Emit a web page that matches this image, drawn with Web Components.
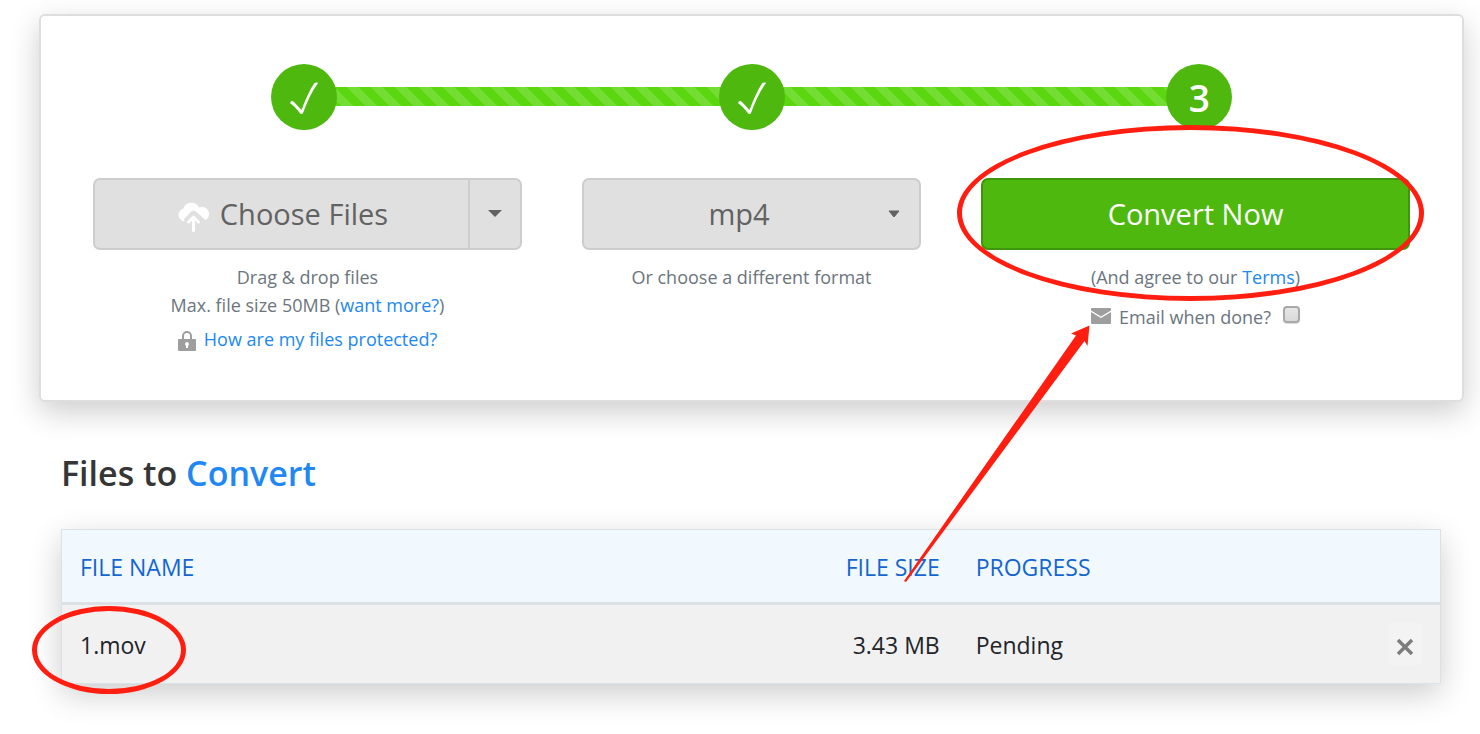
<!DOCTYPE html>
<html lang="en">
<head>
<meta charset="utf-8">
<title>Files to Convert</title>
<style>
  html { background: #fff; }
  body { margin: 0; font-family: "Open Sans", "Noto Sans", sans-serif; color: #212529; }
</style>
</head>
<body>
<converter-page></converter-page>
<script>
const define = (name, html) => {
  const tpl = document.createElement('template');
  tpl.innerHTML = html;
  customElements.define(name, class extends HTMLElement {
    constructor() {
      super();
      this.attachShadow({ mode: 'open' }).append(tpl.content.cloneNode(true));
    }
  });
};

define('step-badge', `
  <style>
    :host { position: relative; display: grid; place-items: center; width: 66px; height: 66px; border-radius: 50%;
      background: #4eb80e; color: #fff; font-size: 37px; font-weight: 600; line-height: 1; }
    ::slotted(svg) { display: block; }
  </style>
  <slot></slot>`);

define('progress-steps', `
  <style>
    :host { position: relative; display: flex; justify-content: space-between; width: 73%; margin: 0 auto; }
    .bar { position: absolute; inset: 23px 33px auto; height: 19px; background: #5bd70f
      linear-gradient(45deg, rgba(255,255,255,.15) 25%, transparent 25%, transparent 50%,
        rgba(255,255,255,.15) 50%, rgba(255,255,255,.15) 75%, transparent 75%) 19px 0 / 24px 24px; }
  </style>
  <div class="bar"></div>
  <slot></slot>`);

define('hint-text', `
  <style>
    :host { display: block; font-size: 18px; line-height: 28px; text-align: center; color: #6c757d; }
    ::slotted(a) { color: #2188f3; text-decoration: none; }
  </style>
  <slot></slot>`);

define('icon-line', `
  <style>
    :host { display: flex; justify-content: center; align-items: center; gap: 8px; margin-top: 6px;
      font-size: 18px; line-height: 28px; color: #6c757d; }
    ::slotted(a) { color: #2188f3; text-decoration: none; }
    ::slotted(svg) { margin-top: 4px; }
  </style>
  <slot></slot>`);

define('file-picker', `
  <style>
    :host { display: flex; height: 72px; box-sizing: border-box; border: 2px solid #cdcdcd; border-radius: 7px;
      background: #e0e0e0; overflow: hidden; }
    button { display: flex; align-items: center; justify-content: center; border: 0; margin: 0; padding: 0;
      background: none; color: #626262; font: 29px/40px "Open Sans", "Noto Sans", sans-serif; }
    .main { flex: 1; gap: 10px; padding-left: 3px; }
    .main svg { margin-top: 6px; }
    .more { width: 52px; border-left: 2px solid #cdcdcd; }
  </style>
  <button class="main" type="button">
    <svg width="32" height="32" viewBox="0 0 32 32" aria-hidden="true">
      <path fill="#fff" d="M3.500 19.500A6.500 6.500 0 0 1 5.200 7.800 8.500 8.500 0 0 1 21 6.600a7 7 0 0 1 10 6.600 6.800 6.800 0 0 1-3.500 5.800L19 11.500a5 5 0 0 0-7 0L6 20.500z"/>
      <path fill="none" stroke="#e0e0e0" stroke-width="3" stroke-linejoin="round" stroke-linecap="round" d="M7.500 18.500l8-7.500 8 7.500"/>
      <path fill="none" stroke="#fff" stroke-width="3" stroke-linecap="round" stroke-linejoin="round" d="M15.500 29.500V16.500M10.500 21l5-5 5 5"/>
    </svg>
    <span>Choose Files</span>
  </button>
  <button class="more" type="button" aria-label="More sources">
    <svg width="14" height="8" viewBox="0 0 14 8" aria-hidden="true"><path fill="#626262" d="M0 0h14L7 7z"/></svg>
  </button>`);

define('format-select', `
  <style>
    :host { display: grid; }
    select, svg { grid-area: 1 / 1; }
    select { appearance: none; height: 72px; width: 100%; box-sizing: border-box; margin: 0; padding: 0 25px 0 0;
      border: 2px solid #cdcdcd; border-radius: 7px; background: #e0e0e0; color: #626262;
      font: 29px/40px "Open Sans", "Noto Sans", sans-serif; text-align: center; text-align-last: center; }
    svg { place-self: center end; margin-right: 21px; pointer-events: none; }
  </style>
  <select aria-label="Output format"><option>mp4</option></select>
  <svg width="12" height="8" viewBox="0 0 12 8" aria-hidden="true"><path fill="#626262" stroke="#626262" stroke-linejoin="round" d="M1 1h10L6 7z"/></svg>`);

define('convert-button', `
  <style>
    :host { display: block; }
    button { display: block; width: 100%; height: 72px; box-sizing: border-box; border: 2px solid #3f950b;
      border-radius: 7px; background: #4eb80e; color: #fff; font: 29px/40px "Open Sans", "Noto Sans", sans-serif; }
  </style>
  <button type="button"><slot></slot></button>`);

define('ring-mark', `
  <style>
    :host { position: absolute; box-sizing: border-box; border: 5px solid #ff1e10; border-radius: 50%;
      pointer-events: none; z-index: 2; }
  </style>`);

define('arrow-mark', `
  <style>
    :host { position: absolute; pointer-events: none; z-index: 2; }
    svg { display: block; }
  </style>
  <svg width="186" height="257" viewBox="0 0 186 257" aria-hidden="true">
    <path fill="#ff1e10" d="M185.500 0.500L167 8.500l5 2L0 256l2 1L180.500 16l3 5z"/>
  </svg>`);

define('email-option', `
  <style>
    :host { display: flex; justify-content: center; align-items: center; gap: 8px; margin-top: 12px;
      font-size: 18px; line-height: 28px; color: #6c757d; }
    svg { margin-bottom: 2px; }
    input { appearance: none; width: 17px; height: 17px; margin: 0 0 6px 4px; border: 2px solid #a9a9a9; border-radius: 4px;
      background: linear-gradient(#e6e6e6, #dadada); box-shadow: 0 1px 1px rgba(0,0,0,.15); box-sizing: border-box; }
  </style>
  <svg width="20" height="16" viewBox="0 0 20 16" aria-hidden="true">
    <path fill="#9e9e9e" d="M1 0h18a1 1 0 0 1 1 1v1.500L10 8.500 0 2.500V1a1 1 0 0 1 1-1zM0 4l10 6 10-6v11a1 1 0 0 1-1 1H1a1 1 0 0 1-1-1z"/>
  </svg>
  <label for="email">Email when done?</label>
  <input id="email" type="checkbox">`);

define('converter-card', `
  <style>
    :host { display: block; padding: 48px 52px 47px; border: 2px solid #dedede; border-radius: 6px; background: #fff;
      box-shadow: 0 10px 30px rgba(0,0,0,.2); }
    .columns { display: grid; grid-template-columns: 429fr 339fr 429fr; gap: 60px; margin-top: 48px; }
    .column { position: relative; }
    hint-text { margin-top: 13px; }
    ring-mark { inset: -53px -14px auto -24px; height: 176px; }
    arrow-mark { top: 147px; right: 320px; }
  </style>
  <progress-steps>
    <step-badge><svg width="30" height="36" viewBox="0 0 30 36" role="img" aria-label="Done"><path fill="#fff" d="M1.500 24.500c-1-2 1.500-3.500 3-2l8 8.500C16 22 20 12 25 4.500c1-1 3-1.200 4-.5C23 12 18.500 22 14 34c-.5 1.200-2.500 1.200-3.300 0-2.700-3.700-5.700-7-9.200-9.500z"/></svg></step-badge>
    <step-badge><svg width="30" height="36" viewBox="0 0 30 36" role="img" aria-label="Done"><path fill="#fff" d="M1.500 24.500c-1-2 1.500-3.500 3-2l8 8.500C16 22 20 12 25 4.500c1-1 3-1.200 4-.5C23 12 18.500 22 14 34c-.5 1.200-2.500 1.200-3.300 0-2.700-3.700-5.700-7-9.200-9.500z"/></svg></step-badge>
    <step-badge>3</step-badge>
  </progress-steps>
  <div class="columns">
    <div class="column">
      <file-picker></file-picker>
      <hint-text>Drag &amp; drop files<br>Max. file size 50MB (<a href="#more">want more?</a>)</hint-text>
      <icon-line>
        <svg width="18" height="20" viewBox="0 0 18 20" aria-hidden="true">
          <path fill="none" stroke="#9e9e9e" stroke-width="2" d="M5 9V5a4 4 0 0 1 8 0v4"/>
          <path fill="#9e9e9e" fill-rule="evenodd" d="M1 8h16a1 1 0 0 1 1 1v10a1 1 0 0 1-1 1H1a1 1 0 0 1-1-1V9a1 1 0 0 1 1-1zM9 11a2 2 0 0 0-1 3.700V17h2v-2.300A2 2 0 0 0 9 11z"/>
        </svg>
        <a href="#protected">How are my files protected?</a>
      </icon-line>
    </div>
    <div class="column">
      <format-select></format-select>
      <hint-text>Or choose a different format</hint-text>
    </div>
    <div class="column">
      <convert-button>Convert Now</convert-button>
      <hint-text>(And agree to our <a href="#terms">Terms</a>)</hint-text>
      <email-option></email-option>
      <ring-mark></ring-mark>
      <arrow-mark></arrow-mark>
    </div>
  </div>`);

define('file-table', `
  <style>
    :host { display: block; box-shadow: 0 10px 30px rgba(0,0,0,.2); }
    table { width: 100%; border-collapse: separate; border-spacing: 0; border: 1px solid #dae1e7; table-layout: fixed; font-size: 23px; line-height: 32px; }
    th, td { box-sizing: border-box; padding: 2px 18px 0; }
    th { height: 75px; background: #f1f9ff; border-bottom: 3px solid #dce1e6;
      color: #1565d0; font-weight: 400; text-align: left; text-transform: uppercase; }
    td { position: relative; height: 78px; background: #f1f1f1; }
    .name { width: 50%; }
    .size { width: 15%; text-align: right; }
    .progress { width: 25%; }
    .drop { padding-top: 0; text-align: right; }
    button { display: inline-grid; place-items: center; width: 34px; height: 42px; padding: 6px 0 0; border: 0; border-radius: 6px;
      background: #f3f3f3; vertical-align: middle; }
    ring-mark { left: -30px; top: 1px; width: 154px; height: 88px; }
  </style>
  <table>
    <thead><tr><th class="name">File name</th><th class="size">File size</th><th class="progress">Progress</th><th></th></tr></thead>
    <tbody><tr>
      <td>1.mov<ring-mark></ring-mark></td>
      <td class="size">3.43 MB</td>
      <td>Pending</td>
      <td class="drop"><button type="button" aria-label="Remove file"><svg width="18" height="18" viewBox="0 0 18 18" aria-hidden="true"><path stroke="#7d7d7d" stroke-width="3.500" d="M2 2l14 14M16 2L2 16"/></svg></button></td>
    </tr></tbody>
  </table>`);

define('converter-page', `
  <style>
    :host { display: block; padding: 14px 16px 50px 39px; }
    main { display: block; }
    section { padding: 47px 23px 0 22px; }
    h2 { margin: 0 0 32px; font-size: 34px; line-height: 48px; font-weight: 600; color: #363636; }
    h2 span { color: #2188f3; }
  </style>
  <main>
    <converter-card></converter-card>
    <section>
      <h2>Files to <span>Convert</span></h2>
      <file-table></file-table>
    </section>
  </main>`);
</script>
</body>
</html>
